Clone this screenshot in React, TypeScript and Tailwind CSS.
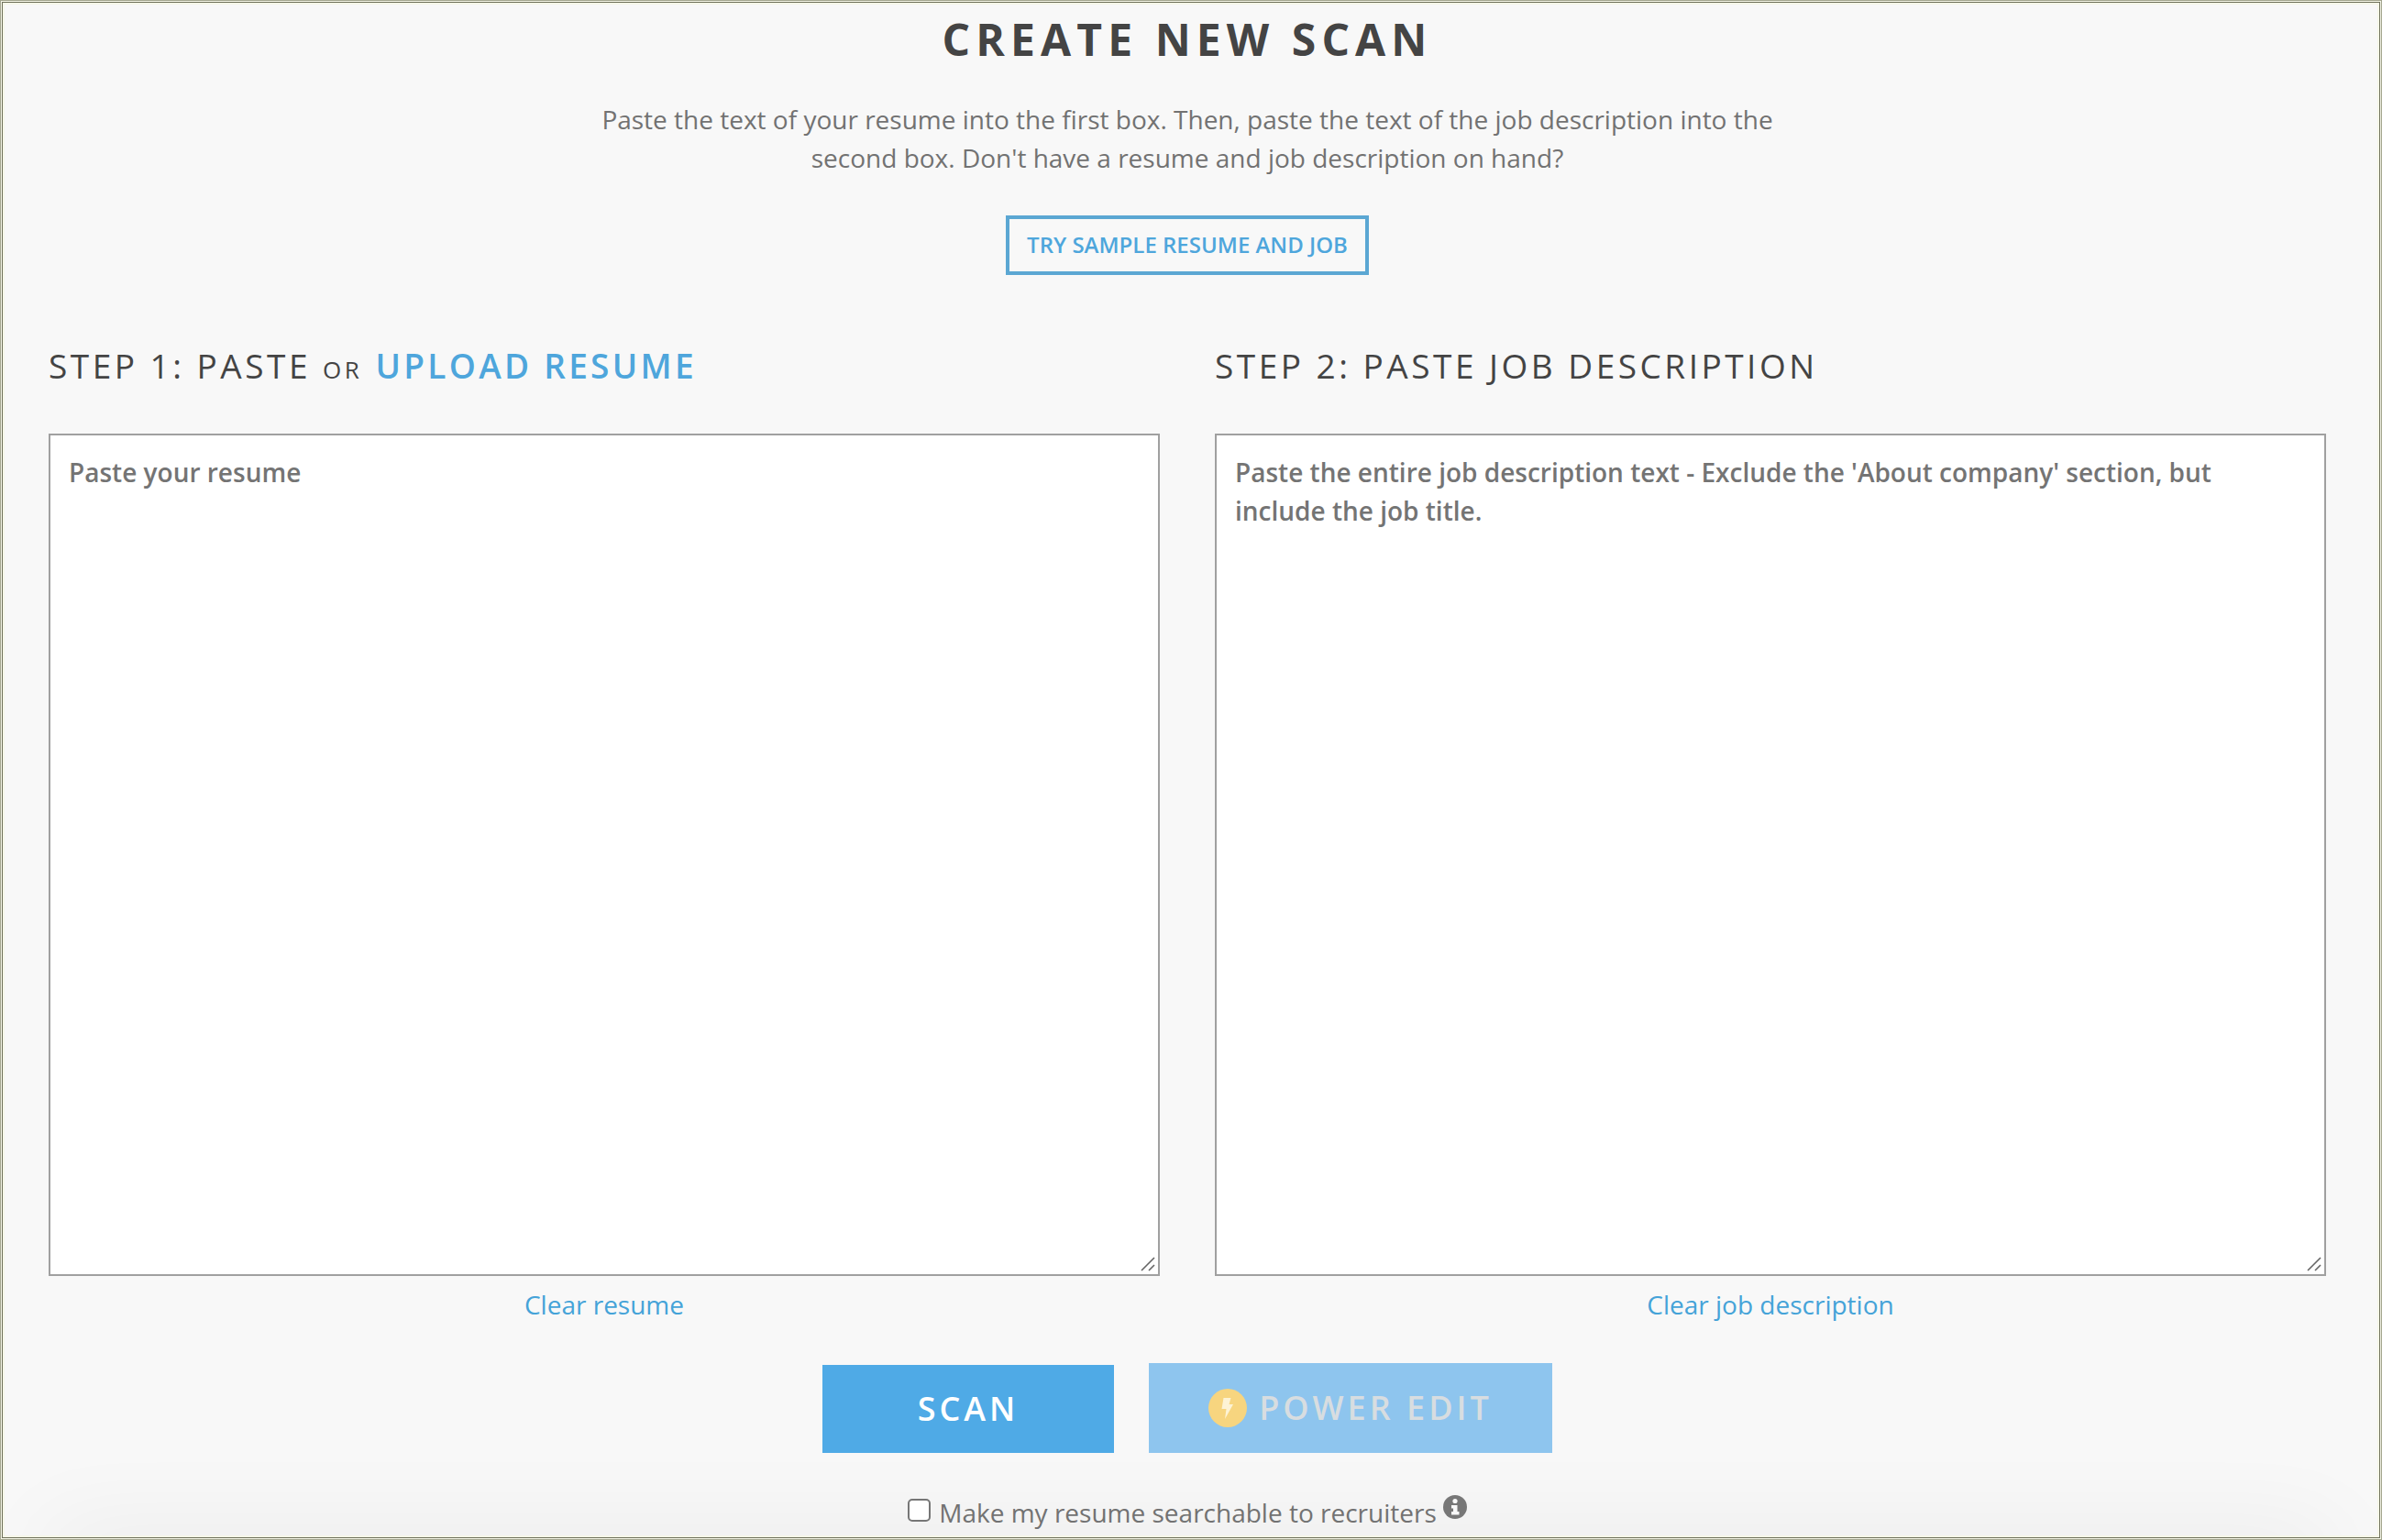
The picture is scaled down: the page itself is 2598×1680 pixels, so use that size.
const font = { fontFamily: '"Open Sans", sans-serif' };

function ResizeGrip() {
  return (
    <svg className="absolute bottom-[3px] right-[3px]" width="16" height="16" viewBox="0 0 16 16">
      <path d="M1 15 L15 1 M9 15 L15 9" stroke="#666" strokeWidth="1.6" fill="none" />
    </svg>
  );
}

function Field({ placeholder, clear }: { placeholder: string; clear: string }) {
  return (
    <div className="flex-1 min-w-0">
      <div className="relative h-[919px] border-2 border-[#a0a0a0] bg-white px-[20px] py-[19px]">
        <p className="text-[28px] leading-[42px] font-semibold text-[#747474]">{placeholder}</p>
        <ResizeGrip />
      </div>
      <p className="mt-[10px] text-center text-[28px] leading-[42px] text-[#45a3d8]">{clear}</p>
    </div>
  );
}

export default function App() {
  return (
    <div
      style={font}
      className="relative h-[1680px] w-[2598px] overflow-hidden border border-[#a3a58f] bg-[#f8f8f8] text-[#727272]"
    >
      <div className="absolute left-[50px] right-[50px] top-[1676px] h-[40px] shadow-[0_0_100px_rgba(0,0,0,0.09)]" />
      <div className="absolute inset-0 border-[4px] border-[#f5f6e8]" />
      <div className="absolute inset-[1px] border border-[#6e705a]" />
      <div className="relative flex flex-col items-center pl-[52px] pr-[60px] pt-[12px]">
        <h1 className="text-[48px] leading-[60px] font-bold tracking-[6.1px] text-[#444444]">CREATE NEW SCAN</h1>
        <p className="mt-[36px] w-[1300px] text-center text-[28px] leading-[42px]">
          Paste the text of your resume into the first box. Then, paste the text of the job description into the second box. Don't have a resume and job description on hand?
        </p>
        <div className="mt-[42px] border-[4px] border-[#5ba7d3] px-[19px] pb-[13px] pt-[11px] text-[24px] leading-[33px] font-semibold text-[#4ea6dc]">
          TRY SAMPLE RESUME AND JOB
        </div>
        <div className="mt-[63px] flex w-full gap-[60px]">
          <h2 className="flex-1 text-[37px] leading-[72px] tracking-[3.5px] text-[#444444]">
            STEP 1: PASTE <span className="mr-[1px] text-[26px]">OR</span>{" "}
            <span className="font-semibold tracking-[3.3px] text-[#4ea6dc]">UPLOAD RESUME</span>
          </h2>
          <h2 className="flex-1 text-[37px] leading-[72px] tracking-[3.5px] text-[#444444]">STEP 2: PASTE JOB DESCRIPTION</h2>
        </div>
        <div className="mt-[34px] flex w-full gap-[60px]">
          <Field placeholder="Paste your resume" clear="Clear resume" />
          <Field
            placeholder="Paste the entire job description text - Exclude the 'About company' section, but include the job title."
            clear="Clear job description"
          />
        </div>
        <div className="mt-[43px] flex items-end gap-[38px]">
          <div className="flex h-[96px] w-[318px] items-center justify-center bg-[#4faae6] text-[36px] font-semibold tracking-[4px] text-white">
            SCAN
          </div>
          <div className="flex h-[98px] w-[440px] items-center justify-center gap-[13px] bg-[#8ec5ee] text-[36px] font-semibold tracking-[4px] text-[#d8dde0]">
            <svg width="42" height="42" viewBox="0 0 42 42">
              <circle cx="21" cy="21" r="21" fill="#f7d57f" />
              <path d="M16.5 10 H24.5 L22.5 17 H27 L18 33 L19.5 22 H14.5 Z" fill="#fdf3d5" />
            </svg>
            POWER EDIT
          </div>
        </div>
        <div className="mt-[44px] flex items-start text-[28px] leading-[42px]">
          <span className="mr-[9px] mt-[6px] h-[25px] w-[25px] rounded-[5px] border-2 border-[#767676] bg-white" />
          <span>Make my resume searchable to recruiters</span>
          <svg className="ml-[7px] mt-[2px]" width="26" height="26" viewBox="0 0 26 26">
            <circle cx="13" cy="13" r="13" fill="#777777" />
            <circle cx="13" cy="6.5" r="2.6" fill="#f8f8f8" />
            <path d="M9 11 H15.5 V18 H17.5 V21.5 H9 V18 H11 V14.5 H9 Z" fill="#f8f8f8" />
          </svg>
        </div>
      </div>
    </div>
  );
}
